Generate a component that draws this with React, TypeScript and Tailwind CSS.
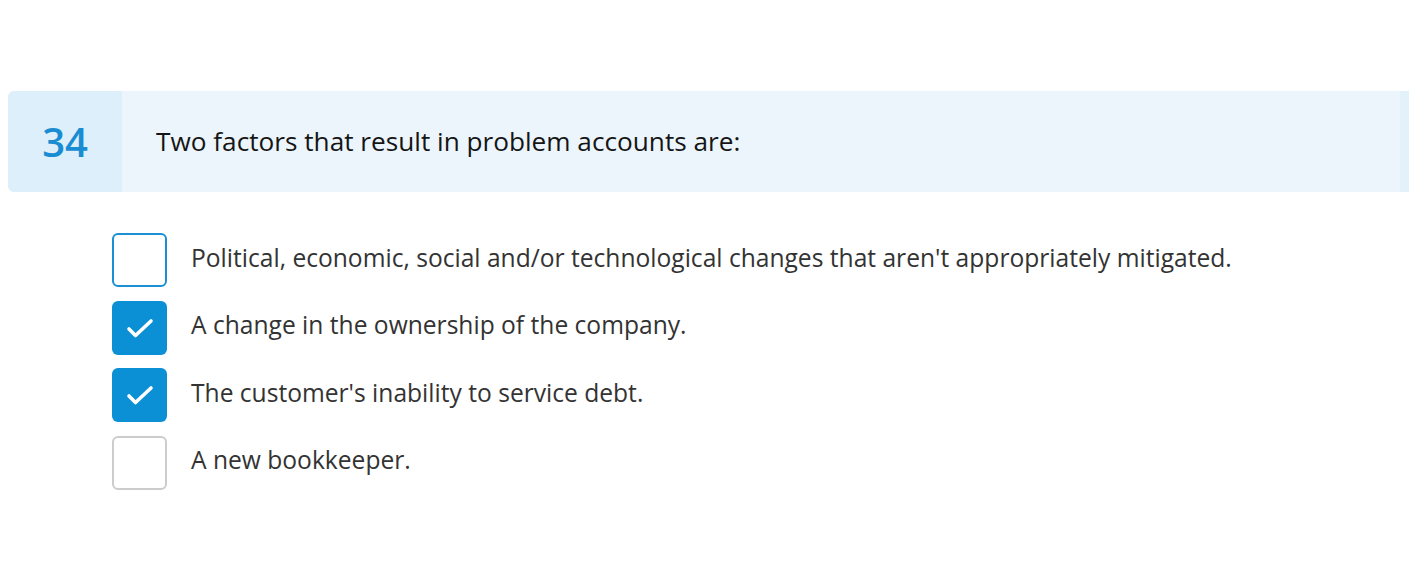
const options = [
  { text: "Political, economic, social and/or technological changes that aren't appropriately mitigated.", checked: false, focused: true },
  { text: "A change in the ownership of the company.", checked: true, focused: false },
  { text: "The customer's inability to service debt.", checked: true, focused: false },
  { text: "A new bookkeeper.", checked: false, focused: false },
];

function Box({ checked, focused }: { checked: boolean; focused: boolean }) {
  if (checked) {
    return (
      <div className="flex h-[54px] w-[55px] shrink-0 items-center justify-center rounded-[6px] bg-[#0b8fd5]">
        <svg width="30" height="24" viewBox="0 0 30 24" fill="none">
          <path d="M4 13 L10.5 19.5 L26 5" stroke="white" strokeWidth="3.6" strokeLinecap="round" strokeLinejoin="round" />
        </svg>
      </div>
    );
  }
  return (
    <div
      className={
        "h-[54px] w-[55px] shrink-0 rounded-[6px] border-2 bg-white " +
        (focused ? "border-[#1b8fd3]" : "border-[#cccccc]")
      }
    />
  );
}

export default function App() {
  return (
    <div className="min-h-screen bg-white pt-[91px] font-['Open_Sans',sans-serif]">
      <div className="ml-[8px] flex h-[101px] overflow-hidden rounded-l-[6px] bg-[#edf5fc]">
        <div className="flex w-[114px] shrink-0 items-center justify-center bg-[#ddeffa]">
          <span className="text-[40px] font-semibold leading-none text-[#1a8dd2]">34</span>
        </div>
        <div className="flex flex-1 items-center pl-[34px] text-[26.2px] text-[#151515]">
          Two factors that result in problem accounts are:
        </div>
        <div className="w-[9px] shrink-0 bg-[#e3f1fb]" />
      </div>
      <div className="ml-[112px] mt-[41px] flex flex-col gap-[13.5px]">
        {options.map((o) => (
          <label key={o.text} className="flex items-center gap-[24px]">
            <Box checked={o.checked} focused={o.focused} />
            <span className="-mt-[4px] text-[24.6px] text-[#333333]">{o.text}</span>
          </label>
        ))}
      </div>
    </div>
  );
}
